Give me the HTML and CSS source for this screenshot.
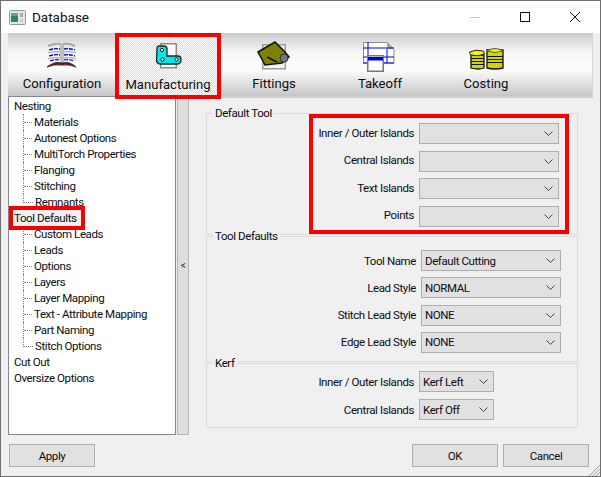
FILE: index.html
```html
<!DOCTYPE html>
<html lang="en">
<head>
<meta charset="utf-8">
<title>Database</title>
<link rel="stylesheet" href="styles.css">
</head>
<body>
<div class="window">
  <header class="titlebar">
    <svg class="app-icon" width="17" height="15" viewBox="0 0 17 15">
      <rect x=".5" y=".5" width="16" height="14" rx="1" fill="#e4e6e6" stroke="#9a9a9a"/>
      <rect x="2" y="3" width="7" height="9" fill="#2f7f78"/>
      <rect x="2" y="3" width="7" height="3" fill="#5aa7a0"/>
      <rect x="11" y="3" width="3" height="4" fill="#9fb3b3"/>
      <rect x="11" y="9" width="3" height="3" fill="#c9cfcf"/>
    </svg>
    <span class="title">Database</span>
    <div class="controls">
      <svg class="ctl" width="12" height="12" viewBox="0 0 12 12"><path d="M1 6.5h10" stroke="#c6c6c6"/></svg>
      <svg class="ctl" width="12" height="12" viewBox="0 0 12 12"><rect x="1.5" y="1.5" width="9" height="9" fill="none" stroke="#111"/></svg>
      <svg class="ctl" width="12" height="12" viewBox="0 0 12 12"><path d="M1 1l10 10M11 1L1 11" stroke="#111" fill="none"/></svg>
    </div>
  </header>

  <nav class="toolbar">
    <div class="tab">
      <svg class="tab-icon" width="40" height="32" viewBox="0 0 40 32">
        <path d="M19 3v19M21 3v19" stroke="#aaa" stroke-width="1.4"/>
        <path d="M6 5q7-3 13-2M21 3q6-1 12 2" stroke="#a8a8a8" stroke-width="2" fill="none"/>
        <path d="M7 9q6-2 11-1M22 8q5-1 11 1" stroke="#0000e0" stroke-width="1.3" stroke-dasharray="4 1" fill="none"/>
        <path d="M6 12q6-2 12-1M22 11q6-1 12 1" stroke="#b0b0b0" stroke-width="1.3" fill="none"/>
        <path d="M7 15q6-2 11-1M22 14q5-1 11 1" stroke="#0000e0" stroke-width="1.3" stroke-dasharray="4 1" fill="none"/>
        <path d="M6 18q6-2 12-1M22 17q6-1 12 1" stroke="#b0b0b0" stroke-width="1.3" fill="none"/>
        <path d="M8 20q5-2 10-1M22 19q5-1 10 1" stroke="#0000e0" stroke-width="1.2" stroke-dasharray="4 1" fill="none"/>
        <path d="M5 26q7-6 15-4q8-2 14 4q-7-3-14-2q-8-1-15 2z" fill="#8b0a0a" stroke="#222" stroke-width=".8"/>
      </svg>
      <span class="tab-label">Configuration</span>
    </div>
    <div class="tab active">
      <svg class="tab-icon" width="40" height="32" viewBox="0 0 40 32">
        <rect x="12.75" y="2.75" width="15.5" height="24" fill="#fff" stroke="#8c8c8c" stroke-width="1.5"/>
        <path d="M11 5h5q3 0 3 3v7h11q3 0 3 3.5q0 4.5-3.5 4.5h-17q-3 0-4-3L9 8q0-3 2-3z" fill="#00e8e8" stroke="#222" stroke-width="1.3"/>
        <circle cx="14" cy="9" r="1.6" fill="#fff" stroke="#111"/>
        <circle cx="14.5" cy="18.5" r="1.6" fill="#fff" stroke="#111"/>
        <circle cx="28.5" cy="18.5" r="1.6" fill="#fff" stroke="#111"/>
      </svg>
      <span class="tab-label">Manufacturing</span>
    </div>
    <div class="tab">
      <svg class="tab-icon" width="40" height="32" viewBox="0 0 40 32">
        <rect x="8.75" y="3.75" width="22.5" height="24" fill="#f4f4f4" stroke="#9c9c9c" stroke-width="1.5"/>
        <path d="M4 11L21 1l10 10 4 5-7 6-17 2z" fill="#808000" stroke="#111" stroke-width="1.5"/>
        <circle cx="30" cy="17" r="4" fill="#777" stroke="#333"/>
        <path d="M13 16l10 5" stroke="#111" stroke-width="1.5"/>
      </svg>
      <span class="tab-label">Fittings</span>
    </div>
    <div class="tab">
      <svg class="tab-icon" width="40" height="32" viewBox="0 0 40 32">
        <path d="M3.5 1.5h24l6.5 7v13.500h-30.500z" fill="#fff" stroke="#8c8c8c"/>
        <path d="M27 1l7 7h-7z" fill="#a5a5a5"/>
        <path d="M3 7h31M3 16h31M3 22h31M8 1v21M27 8v14" stroke="#0000e0" fill="none"/>
        <rect x="7.750" y="14.750" width="15.500" height="15.500" fill="#fff" stroke="#777" stroke-width="1.500"/>
        <rect x="8" y="16" width="15" height="3.500" fill="#0000e0"/>
      </svg>
      <span class="tab-label">Takeoff</span>
    </div>
    <div class="tab">
      <svg class="tab-icon" width="40" height="32" viewBox="0 0 40 32">
        <path d="M5 14h13v13q-6 2-13 0z" fill="#d4d400" stroke="#111" stroke-width="1.300"/>
        <path d="M3.500 11q6-3 14-1l1 3q-6 3-14 1z" fill="#f6f600" stroke="#222"/>
        <path d="M5 17.500h13M5 20.500h13M5 23.500h13" stroke="#111" stroke-width="1.200"/>
        <path d="M21 9h16v18q-8 2-16 0z" fill="#d4d400" stroke="#111" stroke-width="1.300"/>
        <path d="M21 10q8-5 16 0q-8 3-16 0z" fill="#f6f600" stroke="#555"/>
        <path d="M21 15.500h16M21 18.500h16M21 21.500h16" stroke="#111" stroke-width="1.200"/>
      </svg>
      <span class="tab-label">Costing</span>
    </div>
  </nav>

  <main class="main">
    <ul class="tree">
      <li class="node">Nesting</li>
      <li class="node child">Materials</li>
      <li class="node child">Autonest Options</li>
      <li class="node child">MultiTorch Properties</li>
      <li class="node child">Flanging</li>
      <li class="node child">Stitching</li>
      <li class="node child last">Remnants</li>
      <li class="node"><span class="selected">Tool Defaults</span></li>
      <li class="node child">Custom Leads</li>
      <li class="node child">Leads</li>
      <li class="node child">Options</li>
      <li class="node child">Layers</li>
      <li class="node child">Layer Mapping</li>
      <li class="node child">Text - Attribute Mapping</li>
      <li class="node child">Part Naming</li>
      <li class="node child last">Stitch Options</li>
      <li class="node">Cut Out</li>
      <li class="node">Oversize Options</li>
    </ul>
    <div class="splitter">&lt;</div>
    <section class="panel">
      <div class="group group-default">
        <span class="legend">Default Tool</span>
        <div class="callout">
          <div class="row"><label class="field-label">Inner / Outer Islands</label><div class="combo"><span class="combo-text"></span><svg class="chev" width="9" height="5" viewBox="0 0 9 5"><path d="M.5.500l4 4 4-4" fill="none" stroke="#444"/></svg></div></div>
          <div class="row"><label class="field-label">Central Islands</label><div class="combo"><span class="combo-text"></span><svg class="chev" width="9" height="5" viewBox="0 0 9 5"><path d="M.5.500l4 4 4-4" fill="none" stroke="#444"/></svg></div></div>
          <div class="row"><label class="field-label">Text Islands</label><div class="combo"><span class="combo-text"></span><svg class="chev" width="9" height="5" viewBox="0 0 9 5"><path d="M.5.500l4 4 4-4" fill="none" stroke="#444"/></svg></div></div>
          <div class="row"><label class="field-label">Points</label><div class="combo"><span class="combo-text"></span><svg class="chev" width="9" height="5" viewBox="0 0 9 5"><path d="M.5.500l4 4 4-4" fill="none" stroke="#444"/></svg></div></div>
        </div>
      </div>
      <div class="group group-tool">
        <span class="legend">Tool Defaults</span>
        <div class="row"><label class="field-label">Tool Name</label><div class="combo"><span class="combo-text">Default Cutting</span><svg class="chev" width="9" height="5" viewBox="0 0 9 5"><path d="M.5.500l4 4 4-4" fill="none" stroke="#444"/></svg></div></div>
        <div class="row"><label class="field-label">Lead Style</label><div class="combo"><span class="combo-text">NORMAL</span><svg class="chev" width="9" height="5" viewBox="0 0 9 5"><path d="M.5.500l4 4 4-4" fill="none" stroke="#444"/></svg></div></div>
        <div class="row"><label class="field-label">Stitch Lead Style</label><div class="combo"><span class="combo-text">NONE</span><svg class="chev" width="9" height="5" viewBox="0 0 9 5"><path d="M.5.500l4 4 4-4" fill="none" stroke="#444"/></svg></div></div>
        <div class="row"><label class="field-label">Edge Lead Style</label><div class="combo"><span class="combo-text">NONE</span><svg class="chev" width="9" height="5" viewBox="0 0 9 5"><path d="M.5.500l4 4 4-4" fill="none" stroke="#444"/></svg></div></div>
      </div>
      <div class="group group-kerf">
        <span class="legend">Kerf</span>
        <div class="row"><label class="field-label">Inner / Outer Islands</label><div class="combo combo-small"><span class="combo-text">Kerf Left</span><svg class="chev" width="9" height="5" viewBox="0 0 9 5"><path d="M.5.500l4 4 4-4" fill="none" stroke="#444"/></svg></div></div>
        <div class="row"><label class="field-label">Central Islands</label><div class="combo combo-small"><span class="combo-text">Kerf Off</span><svg class="chev" width="9" height="5" viewBox="0 0 9 5"><path d="M.5.500l4 4 4-4" fill="none" stroke="#444"/></svg></div></div>
      </div>
    </section>
  </main>

  <footer class="footer">
    <button class="btn" type="button">Apply</button>
    <div class="footer-right">
      <button class="btn" type="button">OK</button>
      <button class="btn" type="button">Cancel</button>
    </div>
  </footer>
  <svg class="grip" width="11" height="11" viewBox="0 0 11 11">
    <path d="M11 0L0 11M11 3.500L3.500 11M11 7L7 11" stroke="#a0a0a0" fill="none"/>
  </svg>
</div>
</body>
</html>
```
FILE: styles.css
```css
* { box-sizing: border-box; }
html, body { margin: 0; padding: 0; }
body {
  font-family: Roboto, "Liberation Sans", sans-serif;
  font-size: 11.5px;
  letter-spacing: -0.4px;
  color: #0c0c14;
  background: #f0f0f0;
}
.window {
  position: relative;
  width: 601px;
  height: 477px;
  border: 1px solid #6e6e6e;
  background: #f0f0f0;
  display: flex;
  flex-direction: column;
  overflow: hidden;
}
.titlebar {
  height: 32px;
  flex: none;
  background: #fff;
  display: flex;
  align-items: center;
  padding-left: 8px;
}
.app-icon { flex: none; margin-right: 6px; }
.title { font-size: 13.5px; letter-spacing: 0; color: #111; }
.controls {
  margin-left: auto;
  display: flex;
  gap: 38px;
  padding-right: 19px;
}
.ctl { display: block; }

.toolbar {
  flex: none;
  width: 585px;
  height: 63px;
  margin-left: 7px;
  padding-left: 1px;
  display: flex;
  background: linear-gradient(#cbcbcb 0, #f6f6f6 30%, #fdfdfd 58%, #c6c6c6 100%);
  border-right: 1px solid #d4d4d4;
}
.tab {
  width: 106px;
  height: 63px;
  padding-top: 8px;
  display: flex;
  flex-direction: column;
  align-items: center;
}
.tab.active {
  position: relative;
  z-index: 1;
  height: 66px;
  outline: 4px solid #f60000;
  outline-offset: -4px;
  background: repeating-conic-gradient(#c4e0f6 0 25%, #fff 0 50%) 0 0 / 2px 2px;
}
.tab-icon { display: block; flex: none; }
.tab-label {
  margin-top: 3px;
  font-size: 13.1px;
  letter-spacing: 0;
  line-height: 16px;
  white-space: nowrap;
}
.tab.active .tab-label { margin-top: 4px; }

.main {
  flex: none;
  height: 339px;
  display: flex;
  margin-left: 7px;
}
.tree {
  width: 168px;
  flex: none;
  margin: 0;
  padding: 1px 0 0 5px;
  list-style: none;
  background: #fff;
  border: 1px solid #828790;
}
.node {
  height: 16px;
  line-height: 16px;
  white-space: nowrap;
}
.child {
  display: flex;
  margin-left: 9px;
  border-left: 1px dotted #808080;
}
.child::before {
  content: "";
  flex: none;
  width: 8px;
  height: 8px;
  margin-right: 2px;
  border-bottom: 1px dotted #808080;
}
.child.last { border-left-color: transparent; }
.child.last::before {
  margin-left: -1px;
  width: 9px;
  border-left: 1px dotted #808080;
}
.selected {
  display: inline-block;
  height: 16px;
  width: 68px;
  margin-left: -1px;
  padding-left: 1px;
  background: #f0f0f0;
  outline: 4px solid #f60000;
}
.splitter {
  width: 12px;
  flex: none;
  margin-left: 1px;
  background: #dedede;
  border: 1px solid #b4b4b4;
  display: flex;
  align-items: center;
  justify-content: center;
  font-size: 10px;
  color: #333;
}
.panel {
  width: 404px;
  flex: none;
  padding: 15px 0 0 17px;
  border-top: 2px solid #cfcfcf;
}
.group {
  position: relative;
  width: 372px;
  border: 1px solid #dcdcdc;
}
.legend {
  position: absolute;
  top: -9px;
  left: 6px;
  padding: 0 2px;
  line-height: 16px;
  background: #f0f0f0;
}
.group-default { height: 122px; margin-bottom: 1px; }
.callout {
  margin: 4px 0 0 106px;
  width: 252px;
  height: 112px;
  padding: 5px 6px 3px 0;
  outline: 4px solid #f60000;
  display: flex;
  flex-direction: column;
  gap: 6.67px;
}
.callout .field-label { margin-bottom: 2px; }
.group-tool {
  height: 126px;
  margin-bottom: 1px;
  padding: 13px 16px 8px 0;
  display: flex;
  flex-direction: column;
  gap: 6.33px;
}
.group-kerf {
  height: 65px;
  padding: 7px 83px 7px 0;
  display: flex;
  flex-direction: column;
  gap: 7px;
}
.row {
  height: 21px;
  flex: none;
  display: flex;
  align-items: center;
  justify-content: flex-end;
}
.field-label { margin-right: 5px; white-space: nowrap; }
.combo {
  width: 140px;
  height: 21px;
  flex: none;
  display: flex;
  align-items: center;
  justify-content: space-between;
  padding: 0 5px 0 3px;
  background: #e1e1e1;
  border: 1px solid #adadad;
}
.combo-small { width: 75px; }
.combo-text { white-space: nowrap; }
.chev { display: block; flex: none; }

.footer {
  flex: 1;
  display: flex;
  justify-content: space-between;
  padding: 9px 11px 0 8px;
  align-items: flex-start;
}
.footer-right { display: flex; gap: 5px; }
.btn {
  width: 86px;
  height: 23px;
  padding: 0;
  font: inherit;
  letter-spacing: inherit;
  color: inherit;
  background: #e1e1e1;
  border: 1px solid #adadad;
}
.grip {
  position: absolute;
  right: 0;
  bottom: 0;
}
```
